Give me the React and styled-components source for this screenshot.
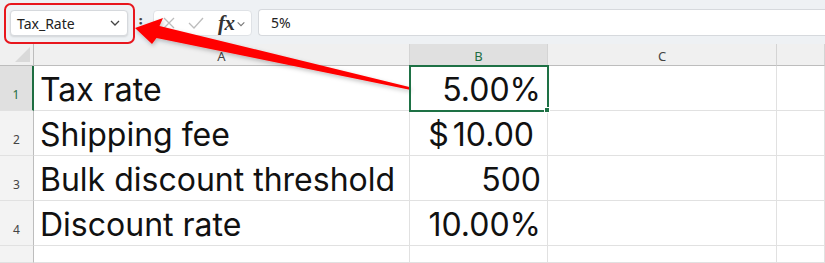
import styled, { createGlobalStyle } from 'styled-components';

const GlobalStyle = createGlobalStyle`
    * { box-sizing: border-box; }
    body {
        margin: 0;
        background: #ffffff;
        overflow: hidden;
    }
`;

const Page = styled.div`
    position: relative;
    width: 825px;
    height: 263px;
    overflow: hidden;
    font-family: "Noto Sans", "Open Sans", sans-serif;
`;

const Toolbar = styled.div`
    display: flex;
    align-items: flex-start;
    height: 44px;
    padding: 10px 0 0 10px;
    background: #eef1f4;
`;

const NameBox = styled.div`
    display: flex;
    align-items: center;
    justify-content: space-between;
    width: 118px;
    height: 26px;
    padding: 0 6px 0 6px;
    background: #ffffff;
    border: 1px solid #d6d9dd;
    border-radius: 4px;
    box-shadow: 0 1px 2px rgba(0, 0, 0, 0.12);
    font-size: 14px;
    color: #222;
`;

const Dots = styled.div`
    width: 25px;
    height: 26px;
    display: flex;
    align-items: center;
    justify-content: center;
    font-size: 15px;
    font-weight: 700;
    color: #444;
`;

const FormulaButtons = styled.div`
    display: flex;
    align-items: center;
    gap: 13px;
    width: 99px;
    height: 26px;
    padding: 0 2px 0 9px;
    background: #ffffff;
    border: 1px solid #dfe2e6;
    border-radius: 4px;
`;

const Fx = styled.span`
    font-family: "Liberation Serif", serif;
    font-style: italic;
    font-weight: 700;
    font-size: 21px;
    line-height: 1;
    color: #333;
    margin-left: 1px;
    letter-spacing: -0.5px;
`;

const FormulaInput = styled.div`
    flex: 1;
    height: 27px;
    margin-left: 6px;
    margin-top: -1px;
    padding-left: 12px;
    display: flex;
    align-items: center;
    background: #ffffff;
    border: 1px solid #d6d9dd;
    border-right: none;
    border-radius: 4px 0 0 4px;
    font-size: 14px;
    color: #222;
`;

const Grid = styled.div`
    display: grid;
    grid-template-columns: 34px 376px 138px 229px 1fr;
    grid-template-rows: 22px repeat(4, 45px) 1fr;
    height: 219px;
`;

const Corner = styled.div`
    position: relative;
    background: #f0f0f0;
    border-right: 1px solid #bdbdbd;
    border-bottom: 1px solid #bdbdbd;

    &::after {
        content: "";
        position: absolute;
        right: 3px;
        bottom: 3px;
        border-style: solid;
        border-width: 0 0 15px 15px;
        border-color: transparent transparent #d9d9d9 transparent;
    }
`;

const ColHead = styled.div`
    display: flex;
    align-items: center;
    justify-content: center;
    background: ${p => (p.$active ? '#e0e0e0' : '#f0f0f0')};
    color: ${p => (p.$active ? '#1e6e42' : '#444')};
    border-right: 1px solid #d4d4d4;
    border-bottom: 1px solid ${p => (p.$active ? '#1e6e42' : '#bdbdbd')};
    font-size: 13px;
    padding-top: 2px;
`;

const RowHead = styled.div`
    display: flex;
    align-items: flex-end;
    justify-content: center;
    padding-bottom: 9px;
    background: ${p => (p.$active ? '#e0e0e0' : '#f3f3f3')};
    color: ${p => (p.$active ? '#1e6e42' : '#444')};
    border-right: ${p => (p.$active ? '2px solid #1e6e42' : '1px solid #bdbdbd')};
    border-bottom: 1px solid #e1e1e1;
    font-size: 12px;
    line-height: 1;
`;

const Cell = styled.div`
    position: relative;
    display: flex;
    align-items: flex-end;
    justify-content: ${p => (p.$num ? 'flex-end' : 'flex-start')};
    padding: 0 ${p => (p.$pad || 6)}px 1px 6px;
    border-right: 1px solid #e1e1e1;
    border-bottom: 1px solid #e1e1e1;
    font-family: "Inter", "Noto Sans", sans-serif;
    font-size: 32px;
    line-height: 1.2;
    color: #111;
    white-space: nowrap;
    ${p => p.$selected && `
        outline: 2px solid #1e7145;
        outline-offset: -1px;
        z-index: 1;
    `}
`;

const Currency = styled.span`
    display: flex;
    gap: 4px;
`;

const FillHandle = styled.span`
    position: absolute;
    right: -3px;
    bottom: -3px;
    width: 6px;
    height: 6px;
    background: #1e7145;
    border: 1px solid #ffffff;
`;

const Annotation = styled.svg`
    position: absolute;
    left: 0;
    top: 0;
    pointer-events: none;
`;

const rows = [
    { label: 'Tax rate', value: '5.00%' },
    { label: 'Shipping fee', value: ['$', '10.00'], pad: 13 },
    { label: 'Bulk discount threshold', value: '500' },
    { label: 'Discount rate', value: '10.00%' },
];

const Chevron = ({ size = 12, color = '#444' }) => (
    <svg width={size} height={size} viewBox="0 0 12 12">
        <path d="M2 4 L6 8 L10 4" fill="none" stroke={color} strokeWidth="1.3" />
    </svg>
);

const App = () => {
    return (
        <Page>
            <GlobalStyle />
            <Toolbar>
                <NameBox>
                    <span>Tax_Rate</span>
                    <Chevron />
                </NameBox>
                <Dots>⁝</Dots>
                <FormulaButtons>
                    <svg width="12" height="12" viewBox="0 0 12 12">
                        <path d="M1 1 L11 11 M11 1 L1 11" stroke="#bdbdbd" strokeWidth="1.3" />
                    </svg>
                    <svg width="16" height="12" viewBox="0 0 16 12">
                        <path d="M1 6 L6 11 L15 1" fill="none" stroke="#bdbdbd" strokeWidth="1.3" />
                    </svg>
                    <Fx>fx</Fx>
                    <span style={{ marginLeft: -12 }}><Chevron size={10} color="#777" /></span>
                </FormulaButtons>
                <FormulaInput>5%</FormulaInput>
            </Toolbar>
            <Grid>
                <Corner />
                <ColHead>A</ColHead>
                <ColHead $active>B</ColHead>
                <ColHead>C</ColHead>
                <ColHead />
                {rows.map((r, i) => (
                    <Row key={i} index={i} row={r} />
                ))}
                <RowHead />
                <Cell />
                <Cell />
                <Cell />
                <Cell />
            </Grid>
            <Annotation width="825" height="263" viewBox="0 0 825 263">
                <defs>
                    <filter id="shadow" x="-10%" y="-50%" width="120%" height="200%">
                        <feDropShadow dx="1" dy="2" stdDeviation="2" floodColor="#000" floodOpacity="0.25" />
                    </filter>
                </defs>
                <rect x="5" y="4" width="129" height="39" rx="6" fill="none" stroke="#e8161d" strokeWidth="2" />
                <polygon
                    filter="url(#shadow)"
                    fill="#ff0000"
                    points="135,28 163,18 159.5,26 410.3,87.2 409.7,89.8 156.5,38 152,44"
                />
            </Annotation>
        </Page>
    );
};

const Row = ({ index, row }) => {
    const selected = index === 0;
    return (
        <>
            <RowHead $active={selected}>{index + 1}</RowHead>
            <Cell>{row.label}</Cell>
            <Cell $num $selected={selected} $pad={row.pad}>
                {Array.isArray(row.value)
                    ? <Currency><span>{row.value[0]}</span><span>{row.value[1]}</span></Currency>
                    : row.value}
                {selected && <FillHandle />}
            </Cell>
            <Cell />
            <Cell />
        </>
    );
};

export default App;
